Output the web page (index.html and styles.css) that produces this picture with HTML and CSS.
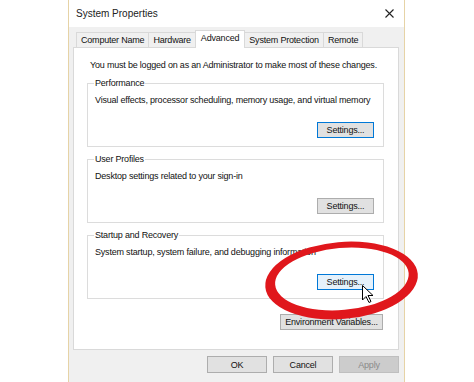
FILE: index.html
```html
<!DOCTYPE html>
<html lang="en">
<head>
    <meta charset="UTF-8">
    <meta name="viewport" content="width=device-width, initial-scale=1.0">
    <title>System Properties</title>
    <link rel="stylesheet" href="styles.css">
</head>
<body>
    <div class="window">
        <div class="titlebar">
            <span class="title">System Properties</span>
            <svg class="close" width="9" height="9" viewBox="0 0 9 9">
                <path d="M0.5 0.5 L8.5 8.5 M8.5 0.5 L0.5 8.5" stroke="#222" stroke-width="1.1" fill="none"/>
            </svg>
        </div>

        <div class="dialog">
            <div class="tabs">
                <div class="tab">Computer Name</div>
                <div class="tab">Hardware</div>
                <div class="tab active">Advanced</div>
                <div class="tab">System Protection</div>
                <div class="tab">Remote</div>
            </div>

            <div class="panel">
                <p class="notice">You must be logged on as an Administrator to make most of these changes.</p>

                <fieldset class="group">
                    <legend>Performance</legend>
                    <p>Visual effects, processor scheduling, memory usage, and virtual memory</p>
                    <div class="actions"><button class="btn default">Settings...</button></div>
                </fieldset>

                <fieldset class="group">
                    <legend>User Profiles</legend>
                    <p>Desktop settings related to your sign-in</p>
                    <div class="actions"><button class="btn">Settings...</button></div>
                </fieldset>

                <fieldset class="group">
                    <legend>Startup and Recovery</legend>
                    <p>System startup, system failure, and debugging information</p>
                    <div class="actions"><button class="btn hover">Settings...</button></div>
                </fieldset>

                <div class="env-row"><button class="btn env">Environment Variables...</button></div>
            </div>

            <div class="footer">
                <button class="btn big">OK</button>
                <button class="btn big">Cancel</button>
                <button class="btn big disabled">Apply</button>
            </div>
        </div>
    </div>

    <!-- red marker and mouse pointer drawn on top of the dialog -->
    <svg class="markup" width="474" height="382" viewBox="0 0 474 382">
        <path fill="#e0171c" fill-rule="evenodd" transform="rotate(-5 341.5 280)"
              d="M265 280.5 a76.5 38.5 0 1 0 153 0 a76.5 38.5 0 1 0 -153 0 Z
                 M275 279 a67 31 0 1 0 134 0 a67 31 0 1 0 -134 0 Z"/>
        <path d="M362.5 285.5 L362.5 300 L366 296.5 L369 302.5 L371 301.5 L368 295.5 L373 295.5 Z"
              fill="#fff" stroke="#000" stroke-width="1" stroke-linejoin="round"/>
    </svg>
</body>
</html>
```

FILE: styles.css
```css
body {
    margin: 0;
    background-color: #fff;
    font-family: "Liberation Sans", Arial, sans-serif;
    font-size: 9px;
    letter-spacing: -0.2px;
    color: #111;
    overflow: hidden;
    height: 382px;
}
p {
    white-space: nowrap;
}
.window {
    margin-left: 68px;
    width: 335px;
    height: 400px;
    border-left: 1px solid #e6d3a6;
    border-right: 1px solid #e6d3a6;
    background-color: #f0f0f0;
}
.titlebar {
    height: 27px;
    background-color: #fff;
    padding: 0 10px 0 7px;
    display: flex;
    align-items: center;
    justify-content: space-between;
}
.title {
    font-size: 10px;
    letter-spacing: 0;
    color: #222;
}
.dialog {
    padding: 3px 5px 0 4px;
}
.tabs {
    display: flex;
    align-items: flex-end;
    margin-left: 3px;
    height: 17px;
}
.tab {
    height: 14px;
    line-height: 14px;
    padding: 0 4px;
    border: 1px solid #d9d9d9;
    border-bottom: none;
    margin-right: -1px;
    background-color: #f0f0f0;
    white-space: nowrap;
}
.tab.active {
    height: 17px;
    line-height: 15px;
    background-color: #fff;
    position: relative;
    margin-bottom: -1px;
    padding: 0 5px;
    z-index: 1;
}
.panel {
    background-color: #fff;
    border: 1px solid #d9d9d9;
    padding: 11px 14px 19px 13px;
}
.notice {
    margin: 0 0 0 3px;
    line-height: 12px;
}
.group {
    margin: 6px 0 0 0;
    padding: 0 9px 8px 7px;
    border: 1px solid #dcdcdc;
}
.group legend {
    padding: 0 1px;
    margin-left: -1px;
    line-height: 12px;
}
.group p {
    margin: 5px 0 0 0;
    line-height: 12px;
}
.actions {
    display: flex;
    justify-content: flex-end;
    margin-top: 16px;
}
.btn {
    font-family: inherit;
    font-size: 9px;
    letter-spacing: -0.2px;
    color: #111;
    background-color: #e1e1e1;
    border: 1px solid #adadad;
    height: 16px;
    width: 57px;
    padding: 0;
    margin: 0;
}
.btn.default {
    border-color: #0078d7;
}
.btn.hover {
    background-color: #e5f1fb;
    border-color: #0078d7;
}
.env-row {
    display: flex;
    justify-content: flex-end;
    margin: 15px 1px 0 0;
}
.btn.env {
    width: 103px;
}
.footer {
    display: flex;
    justify-content: flex-end;
    gap: 6px;
    padding-top: 6px;
}
.btn.big {
    width: 60px;
    height: 17px;
}
.btn.disabled {
    background-color: #cccccc;
    border-color: #bfbfbf;
    color: #8a8a8a;
}
.markup {
    position: absolute;
    top: 0;
    left: 0;
    pointer-events: none;
}
```
